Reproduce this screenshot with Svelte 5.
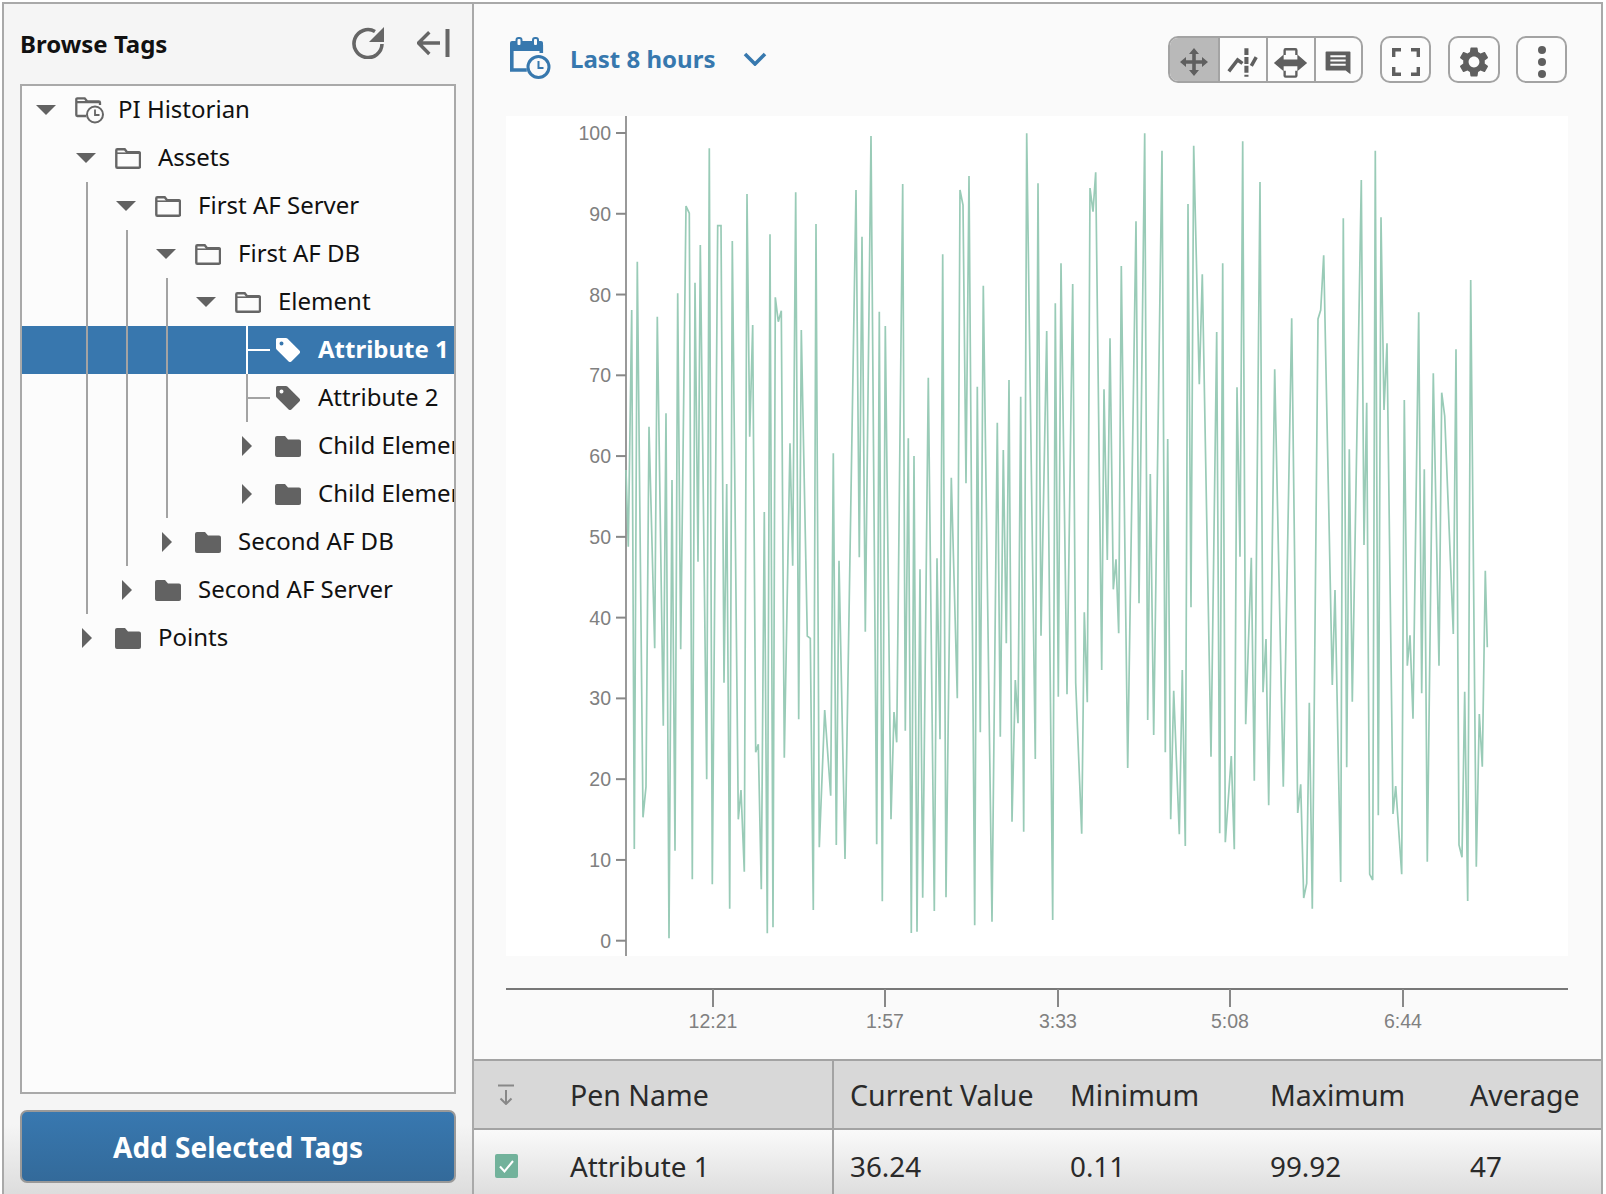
<script>
  // chart extremes read per quadrant, [x, y] relative to the crop they were read from
  const upperLeft = [[48,1050],[65,570],[82,425],[117,920],[142,590],[168,880],[186,1080],[203,520],[228,258],[238,280],[255,488],[271,375],[298,85],[323,317],[333,317],[350,1092],[367,363],[411,222],[419,950],[428,615],[463,1176],[480,343],[496,532],[505,605],[514,572],[540,970],[557,217],[574,630],[618,312],[670,1000],[738,210],[756,350],[783,48],[808,575],[826,618],[878,192],[895,955],[912,1008],[955,773],[998,403],[1024,1073],[1050,210],[1059,255],[1068,1090],[1077,168],[1102,800],[1120,497],[1162,908],[1180,990],[1197,780],[1232,830],[1250,40],[1284,190],[1310,633],[1336,550],[1353,430],[1388,492]];
  const lowerLeft = [[55,50],[73,957],[99,862],[108,770],[134,355],[160,587],[177,1225],[195,962],[212,358],[247,1048],[264,95],[290,748],[307,1063],[342,458],[359,1136],[385,868],[393,780],[403,1025],[437,667],[445,643],[454,1078],[472,1210],[489,1192],[523,683],[548,107],[566,568],[592,318],[601,325],[610,1140],[628,952],[644,540],[662,797],[679,945],[687,92],[705,987],[748,82],[766,305],[800,943],[817,1114],[843,868],[852,546],[860,637],[886,602],[904,1209],[921,1205],[930,118],[938,1103],[973,1143],[981,85],[990,628],[1008,1102],[1042,505],[1094,1186],[1111,607],[1146,1175],[1171,620],[1189,340],[1206,875],[1216,450],[1224,580],[1241,905],[1276,687],[1293,317],[1328,1170],[1345,500],[1371,493],[1397,458]];
  const upperRight = [[30,204],[39,275],[47,157],[72,808],[90,655],[124,438],[168,304],[194,40],[211,1062],[246,92],[263,957],[324,252],[341,77],[358,793],[367,463],[410,636],[428,430],[471,802],[488,64],[540,186],[584,748],[635,595],[714,597],[722,570],[731,406],[790,295],[808,988],[844,180],[860,848],[886,92],[903,292],[912,870],[921,670],[973,840],[1016,577],[1033,1048],[1060,760],[1085,818],[1094,888],[1128,688],[1172,480]];
  const lowerRight = [[5,911],[13,247],[22,517],[65,420],[82,90],[100,178],[108,88],[116,310],[143,714],[177,220],[203,570],[221,615],[256,667],[272,868],[281,482],[298,913],[307,420],[316,948],[333,232],[393,680],[419,910],[436,937],[454,678],[463,958],[480,80],[497,583],[514,83],[523,752],[549,487],[558,327],[566,826],[610,770],[653,849],[662,763],[671,1104],[680,1060],[688,518],[697,1136],[757,465],[765,180],[782,1056],[800,712],[817,515],[852,45],[869,1033],[878,1050],[895,856],[939,852],[947,768],[965,1033],[982,407],[990,316],[999,566],[1025,490],[1042,995],[1077,407],[1120,312],[1137,945],[1146,982],[1154,485],[1163,1113],[1189,1010],[1198,552],[1207,710],[1216,122],[1222,352]];

  const place = (list, ox, oy) => list.map(([x, y]) => [ox + x / 3, oy + y / 3]);

  const points = [
    ...place(upperLeft, 610, 120),
    ...place(lowerLeft, 610, 530),
    ...place(upperRight, 1080, 120),
    ...place(lowerRight, 1080, 530)
  ]
    .sort((a, b) => a[0] - b[0])
    .map((p) => p.map((n) => n.toFixed(1)).join(','))
    .join(' ');

  const yTicks = [100, 90, 80, 70, 60, 50, 40, 30, 20, 10, 0];
  const yOf = (v) => 940.7 - v * 8.077;
  const xTicks = [
    { x: 207, label: '12:21' },
    { x: 379, label: '1:57' },
    { x: 552, label: '3:33' },
    { x: 724, label: '5:08' },
    { x: 897, label: '6:44' }
  ];

  const tree = [
    {
      name: 'PI Historian',
      icon: 'history',
      open: true,
      flat: true,
      kids: [
        {
          name: 'Assets',
          open: true,
          kids: [
            {
              name: 'First AF Server',
              open: true,
              kids: [
                {
                  name: 'First AF DB',
                  open: true,
                  kids: [
                    {
                      name: 'Element',
                      open: true,
                      leaves: [
                        { name: 'Attribute 1', selected: true },
                        { name: 'Attribute 2' }
                      ],
                      flat: true,
                      kids: [{ name: 'Child Element 1' }, { name: 'Child Element 2' }]
                    }
                  ]
                },
                { name: 'Second AF DB' }
              ]
            },
            { name: 'Second AF Server' }
          ]
        },
        { name: 'Points' }
      ]
    }
  ];
</script>

{#snippet folder(open)}
  <svg class="node-icon" width="26" height="21" viewBox="0 0 26 21">
    {#if open}
      <path d="M1.3 5V2.3q0-1 1-1h7.4l2.4 3h11.6q1.3 0 1.3 1.3v13.1q0 1-1 1H2.3q-1 0-1-1z" fill="none" stroke="#666" stroke-width="2.4" />
      <path d="M1 5.2h24" stroke="#666" stroke-width="1.6" />
    {:else}
      <path d="M0 2q0-2 2-2h8l3 3.5h11q2 0 2 2V19q0 2-2 2H2q-2 0-2-2z" fill="#626262" />
    {/if}
  </svg>
{/snippet}

{#snippet node(n, depth)}
  <div class="row" style="--depth:{depth}">
    {#if n.open}
      <svg class="caret" width="20" height="10" viewBox="0 0 20 10"><path d="M0 0h20L10 10z" fill="#626262" /></svg>
    {:else}
      <svg class="caret" width="20" height="20" viewBox="0 0 20 20"><path d="M6 0l10 10L6 20z" fill="#626262" /></svg>
    {/if}
    {#if n.icon === 'history'}
      <svg class="node-icon history" width="30" height="28" viewBox="0 0 30 28">
        <path d="M1.3 19V3.3q0-1 1-1h7.4l2.4 3h11.6q1.3 0 1.3 1.3V9M1 6.2h24M1.3 19q0 1 1 1h9" fill="none" stroke="#666" stroke-width="2.3" />
        <circle cx="20" cy="18.500" r="8" fill="#fcfcfc" stroke="#666" stroke-width="2" />
        <path d="M20 13.500v5.500h4.500" fill="none" stroke="#666" stroke-width="1.8" />
      </svg>
    {:else}
      {@render folder(n.open)}
    {/if}
    <span>{n.name}</span>
  </div>
  {#if n.leaves}
    <div class="leaves" style="--depth:{depth + 1}">
      {#each n.leaves as leaf}
        <div class="row leaf" class:selected={leaf.selected} style="--depth:{depth + 1}">
          <i class="stem"></i>
          <svg class="tag" width="24" height="24" viewBox="0 0 24 24">
            <path fill-rule="evenodd" d="M1.500 0H10a2 2 0 0 1 1.400.6l12 12a2 2 0 0 1 0 2.800l-8 8a2 2 0 0 1-2.800 0l-12-12A2 2 0 0 1 0 10V1.500A1.500 1.500 0 0 1 1.500 0zM5.500 3.500a2 2 0 1 0 0 4 2 2 0 0 0 0-4z" />
          </svg>
          <span>{leaf.name}</span>
        </div>
      {/each}
    </div>
  {/if}
  {#if n.kids}
    <div class="kids" class:flat={n.flat} style="--depth:{depth + 1}">
      {#each n.kids as kid}
        {@render node(kid, depth + 1)}
      {/each}
    </div>
  {/if}
{/snippet}

<div class="shell">
  <aside class="browse">
    <header>
      <h2>Browse Tags</h2>
      <svg class="refresh" width="32" height="32" viewBox="0 0 32 32">
        <path d="M23 4.500A14 14 0 1 0 30 17" fill="none" stroke="#666" stroke-width="3.6" />
        <path d="M32 0v15H17z" fill="#666" />
      </svg>
      <svg class="collapse" width="34" height="32" viewBox="0 0 34 32">
        <path d="M2 16h21M12.300 5.300L1.500 16l10.800 11" fill="none" stroke="#666" stroke-width="3.400" />
        <rect x="28.500" y="2" width="4" height="28" fill="#666" />
      </svg>
    </header>
    <div class="tree">
      {#each tree as n}
        {@render node(n, 0)}
      {/each}
    </div>
    <button class="add">Add Selected Tags</button>
  </aside>

  <main>
    <div class="toolbar">
      <svg class="calendar" width="42" height="42" viewBox="0 0 42 42">
        <path d="M1.800 6v27h15" fill="none" stroke="#3778ae" stroke-width="3.600" />
        <rect x="0" y="4" width="33" height="10" rx="2" fill="#3778ae" />
        <path d="M31.300 8v8" stroke="#3778ae" stroke-width="3.600" />
        <rect x="6.500" y="1" width="5" height="8" rx="2" fill="#fafafa" stroke="#3778ae" stroke-width="2" />
        <rect x="23" y="1" width="5" height="8" rx="2" fill="#fafafa" stroke="#3778ae" stroke-width="2" />
        <circle cx="28.500" cy="30" r="10.500" fill="#fafafa" stroke="#3778ae" stroke-width="3" />
        <path d="M28.500 24v7h5" fill="none" stroke="#3778ae" stroke-width="2" />
      </svg>
      <span class="range">Last 8 hours</span>
      <svg class="chevron" width="24" height="14" viewBox="0 0 24 14"><path d="M2 2l10 10L22 2" fill="none" stroke="#3778ae" stroke-width="3.600" /></svg>
      <div class="spacer"></div>
      <div class="btn-group">
        <button class="active" aria-label="Pan">
          <svg width="28" height="28" viewBox="0 0 28 28"><path d="M14 0l5 6h-3.200v6.200H22V9l6 5-6 5v-3.200h-6.200V22H19l-5 6-5-6h3.200v-6.200H6V19l-6-5 6-5v3.200h6.200V6H9z" fill="#5f5f5f" /></svg>
        </button>
        <button aria-label="Cursor">
          <svg width="47" height="44" viewBox="0 0 47 44">
            <path d="M9 33.600L18 22l5 3.500M32 28l5-9" fill="none" stroke="#5f5f5f" stroke-width="3.600" />
            <path d="M27 10v29" stroke="#5f5f5f" stroke-width="4.200" stroke-dasharray="7 2" />
          </svg>
        </button>
        <button aria-label="Zoom">
          <svg width="47" height="44" viewBox="0 0 47 44">
            <path d="M17 17v-5q0-1 1-1h10q1 0 1 1v5M17 33v5q0 1 1 1h10q1 0 1-1v-5" fill="none" stroke="#5f5f5f" stroke-width="2.400" />
            <path d="M6 25l10-8.500v5h14v-5L40 25l-10 8.500v-5H16v5z" fill="#5f5f5f" />
          </svg>
        </button>
        <button aria-label="Comments">
          <svg width="47" height="44" viewBox="0 0 47 44">
            <path d="M10 14q0-1 1-1h24q1 0 1 1v23l-5-4H11q-1 0-1-1z" fill="#5f5f5f" />
            <path d="M15 18h16M15 22.500h16M15 27h16" stroke="#fcfcfc" stroke-width="2" />
          </svg>
        </button>
      </div>
      <button class="tool fs" aria-label="Fullscreen">
        <svg width="28" height="28" viewBox="0 0 28 28"><path d="M1.700 9V1.700H9M19 1.700h7.300V9M26.300 19v7.300H19M9 26.300H1.700V19" fill="none" stroke="#5f5f5f" stroke-width="3.400" /></svg>
      </button>
      <button class="tool gear" aria-label="Settings">
        <svg width="36" height="36" viewBox="0 0 24 24"><path fill="#5f5f5f" d="M19.140 12.940c.04-.3.06-.61.06-.94 0-.32-.02-.64-.07-.94l2.030-1.580c.18-.14.23-.41.12-.61l-1.920-3.320c-.12-.22-.37-.29-.59-.22l-2.390.96c-.5-.38-1.030-.7-1.620-.94l-.36-2.540c-.04-.24-.24-.41-.48-.41h-3.840c-.24 0-.43.17-.47.41l-.36 2.540c-.59.24-1.130.57-1.620.94l-2.390-.96c-.22-.08-.47 0-.59.22L2.740 8.870c-.12.21-.08.47.12.61l2.030 1.580c-.05.3-.09.63-.09.94s.02.64.07.94l-2.030 1.580c-.18.14-.23.41-.12.61l1.920 3.320c.12.22.37.29.59.22l2.390-.96c.5.38 1.030.7 1.620.94l.36 2.540c.05.24.24.41.48.41h3.840c.24 0 .44-.17.47-.41l.36-2.540c.59-.24 1.130-.56 1.620-.94l2.390.96c.22.08.47 0 .59-.22l1.920-3.320c.12-.22.07-.47-.12-.61l-2.010-1.580zM12 15.600c-1.980 0-3.600-1.620-3.600-3.600s1.620-3.600 3.600-3.600 3.600 1.620 3.600 3.600-1.620 3.600-3.600 3.600z" /></svg>
      </button>
      <button class="tool dots" aria-label="More">
        <svg width="10" height="34" viewBox="0 0 10 34"><circle cx="5" cy="5" r="4" fill="#5f5f5f" /><circle cx="5" cy="17" r="4" fill="#5f5f5f" /><circle cx="5" cy="29" r="4" fill="#5f5f5f" /></svg>
      </button>
    </div>

    <svg class="plot" width="1062" height="840" viewBox="506 116 1062 840">
      <rect x="625" y="116" width="2" height="840" fill="#999" />
      {#each yTicks as v}
        <rect x="616" y={yOf(v) - 1} width="10" height="2" fill="#888" />
        <text x="611" y={yOf(v) + 7} text-anchor="end">{v}</text>
      {/each}
      <polyline points={points} fill="none" stroke="#99cbb7" stroke-width="1.700" stroke-linejoin="miter" />
    </svg>

    <svg class="axis" width="1062" height="103" viewBox="0 0 1062 103">
      <rect x="0" y="32" width="1062" height="2" fill="#777" />
      {#each xTicks as t}
        <rect x={t.x - 1} y="33" width="2" height="18" fill="#888" />
        <text x={t.x} y="72" text-anchor="middle">{t.label}</text>
      {/each}
    </svg>

    <div class="pens">
      <div class="pen-head">
        <svg class="sort" width="18" height="21" viewBox="0 0 18 21"><path d="M1 1.500h16M9 6v14M3.500 14.500L9 20l5.500-5.500" fill="none" stroke="#888" stroke-width="2" /></svg>
        <span class="name">Pen Name</span>
        <span>Current Value</span>
        <span>Minimum</span>
        <span>Maximum</span>
        <span>Average</span>
      </div>
      <div class="pen-row">
        <svg class="check" width="23" height="24" viewBox="0 0 23 24">
          <rect width="23" height="24" rx="2" fill="#72b29b" />
          <path d="M5 12.500l4.500 5L18 7" fill="none" stroke="#fff" stroke-width="2" />
        </svg>
        <span class="name">Attribute 1</span>
        <span>36.24</span>
        <span>0.11</span>
        <span>99.92</span>
        <span>47</span>
      </div>
    </div>
  </main>
</div>

<style>
  :global(body) {
    background: #fff;
    font-family: "Noto Sans", sans-serif;
  }

  .shell {
    display: flex;
    box-sizing: border-box;
    width: 1601px;
    height: 1194px;
    margin: 0 0 0 2px;
    padding-top: 2px;
    overflow: hidden;
  }

  .browse {
    box-sizing: border-box;
    width: 472px;
    padding: 0 16px 0 16px;
    border: 2px solid #a9a9a9;
    border-bottom: 0;
    background: linear-gradient(to bottom, #f5f5f5 1120px, #dcdcdc 1192px);
    display: flex;
    flex-direction: column;
  }

  header {
    display: flex;
    align-items: center;
    height: 80px;
    flex-shrink: 0;
  }

  h2 {
    margin: 0 0 2px;
    font-size: 24px;
    font-weight: 700;
    color: #111;
    flex: 1;
  }

  .refresh {
    margin: 0 33px 2px 0;
  }

  .collapse {
    margin: 0 5px 2px 0;
  }

  .tree {
    box-sizing: border-box;
    height: 1010px;
    flex-shrink: 0;
    border: 2px solid #a9a9a9;
    background: #fcfcfc;
    overflow: hidden;
    white-space: nowrap;
  }

  .row {
    position: relative;
    display: flex;
    align-items: center;
    height: 48px;
    padding-left: calc(var(--depth) * 40px + 14px);
    font-size: 24px;
    color: #111;
  }

  .row span {
    padding-bottom: 4px;
  }

  .caret {
    width: 20px;
    flex-shrink: 0;
    margin-right: 19px;
  }

  .node-icon {
    flex: none;
    margin-right: 17px;
  }

  .node-icon.history {
    margin-right: 13px;
  }

  .kids,
  .leaves {
    position: relative;
  }

  .kids::before,
  .leaves::before {
    content: "";
    position: absolute;
    z-index: 1;
    left: calc(var(--depth) * 40px - 16px);
    top: 0;
    bottom: 0;
    width: 2px;
    background: #a3a3a3;
  }

  .kids.flat::before {
    display: none;
  }

  .leaves::before {
    left: calc(var(--depth) * 40px + 24px);
  }

  .leaf {
    padding-left: calc(var(--depth) * 40px + 54px);
  }

  .stem {
    position: absolute;
    z-index: 2;
    left: calc(var(--depth) * 40px + 26px);
    top: 50%;
    width: 22px;
    height: 2px;
    margin-top: -1px;
    background: #a3a3a3;
  }

  .tag {
    flex: none;
    margin-right: 18px;
    fill: #626262;
  }

  .selected {
    background: #3877ae;
    color: #fff;
    font-weight: 700;
  }

  .selected::before {
    content: "";
    position: absolute;
    z-index: 2;
    left: calc(var(--depth) * 40px + 24px);
    top: 0;
    bottom: 0;
    width: 2px;
    background: #fff;
  }

  .selected .stem {
    background: #fff;
  }

  .selected .tag {
    fill: #fff;
  }

  .add {
    height: 73px;
    margin-top: 16px;
    flex-shrink: 0;
    border: 2px solid #999;
    border-radius: 7px;
    background: linear-gradient(to bottom, #3878b0, #336a9a);
    color: #fff;
    font: 700 28px "Noto Sans", sans-serif;
    padding: 0;
  }

  main {
    box-sizing: border-box;
    width: 1129px;
    border-top: 2px solid #a9a9a9;
    border-right: 2px solid #a9a9a9;
    background: #fafafa;
    padding-top: 0;
  }

  .toolbar {
    display: flex;
    align-items: center;
    height: 112px;
    padding: 0 34px 0 36px;
    box-sizing: border-box;
  }

  .calendar {
    margin: 0 18px 4px 0;
  }

  .range {
    font-size: 24px;
    font-weight: 700;
    color: #3778ae;
    margin-bottom: 4px;
  }

  .chevron {
    margin: 0 0 2px 28px;
  }

  .spacer {
    flex: 1;
  }

  .btn-group {
    display: flex;
    height: 47px;
    box-sizing: border-box;
    margin-bottom: 1px;
    border: 2px solid #a3a3a3;
    border-radius: 10px;
    background: #fcfcfc;
    overflow: hidden;
  }

  .btn-group button {
    display: flex;
    align-items: center;
    justify-content: center;
    width: 48px;
    padding: 0;
    border: 0;
    border-left: 2px solid #a3a3a3;
    background: none;
  }

  .btn-group button:first-child {
    border-left: 0;
    width: 48px;
  }

  .btn-group button:last-child {
    width: 47px;
  }

  .btn-group .active {
    background: #b9b9b9;
    padding-top: 4px;
  }

  .tool {
    display: flex;
    align-items: center;
    justify-content: center;
    box-sizing: border-box;
    height: 47px;
    margin: 0 0 1px 17px;
    padding: 4px 0 0;
    border: 2px solid #a3a3a3;
    border-radius: 10px;
    background: #fcfcfc;
  }

  .fs {
    width: 51px;
  }

  .gear {
    width: 52px;
  }

  .dots {
    width: 51px;
    margin-left: 16px;
  }

  .plot {
    display: block;
    margin-left: 32px;
    background: #fff;
  }

  .axis {
    display: block;
    margin-left: 32px;
  }

  .plot text,
  .axis text {
    font-family: "Liberation Sans", sans-serif;
    font-size: 19.500px;
    fill: #808080;
  }

  .pens {
    font-size: 28.500px;
    color: #2a2a2a;
  }

  .pen-head,
  .pen-row {
    position: relative;
    display: grid;
    grid-template-columns: 360px 220px 200px 200px 1fr;
    align-items: center;
  }

  .pen-head {
    box-sizing: border-box;
    height: 71px;
    border-top: 2px solid #a3a3a3;
    border-bottom: 2px solid #a3a3a3;
    background: #d8d8d8;
  }

  .pen-row {
    height: 64px;
    font-size: 27.800px;
    background: linear-gradient(to bottom, #fafafa, #dedede);
  }

  .pen-head span,
  .pen-row span {
    padding-left: 16px;
  }

  .pen-row span {
    padding-top: 7px;
  }

  .pen-head .name,
  .pen-row .name {
    box-sizing: border-box;
    height: 100%;
    display: flex;
    align-items: center;
    padding-left: 96px;
    border-right: 2px solid #a3a3a3;
  }

  .sort,
  .check {
    position: absolute;
    left: 23px;
    top: 50%;
  }

  .sort {
    left: 23px;
    margin-top: -11px;
  }

  .check {
    left: 21px;
    margin-top: -8px;
  }
</style>
